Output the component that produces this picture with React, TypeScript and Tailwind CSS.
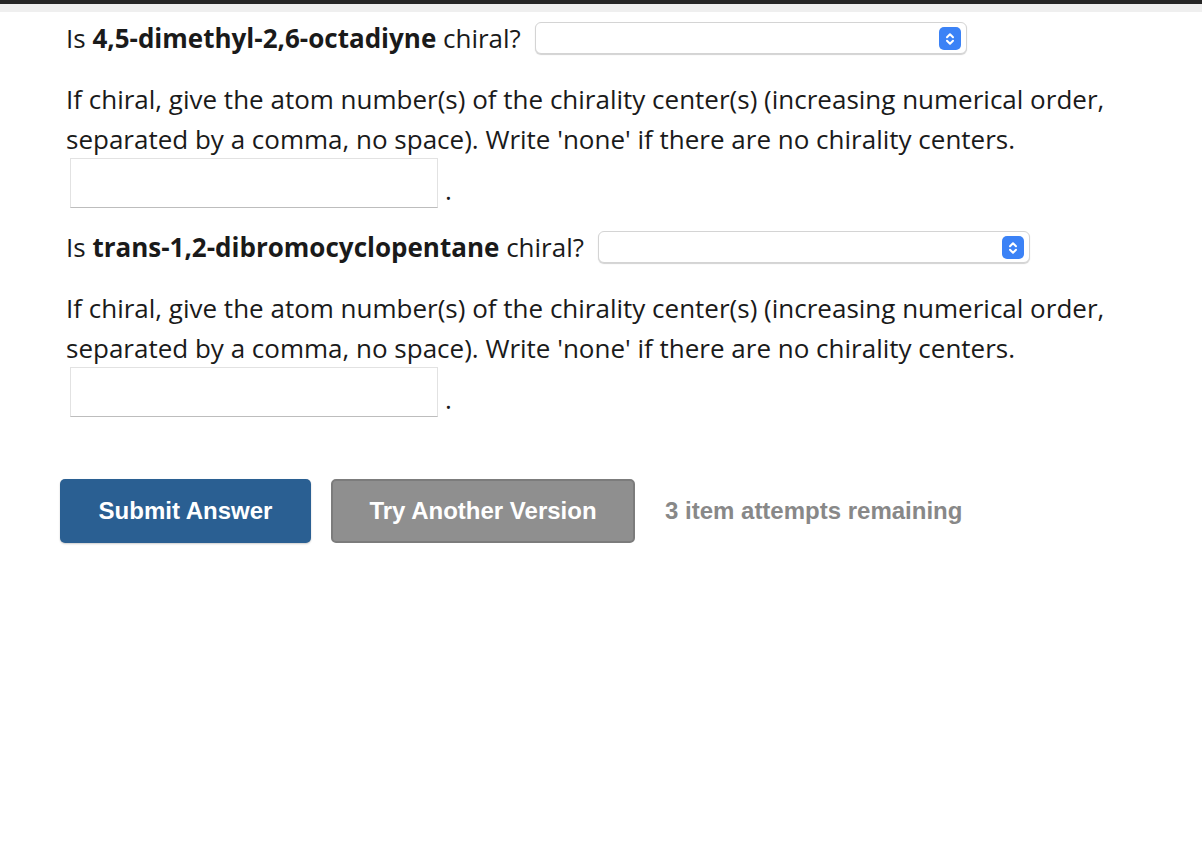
function Select({ width }: { width: string }) {
  return (
    <div
      className={`relative h-[32px] ${width} rounded-[6px] border border-[#d4d4d4] bg-white shadow-[0_1px_1px_rgba(0,0,0,0.18)]`}
    >
      <div className="absolute right-[5px] top-[4px] flex h-[23px] w-[22px] items-center justify-center rounded-[5px] bg-[#3b82f6]">
        <svg width="10" height="14" viewBox="0 0 10 14" fill="none">
          <path d="M2 5.2 5 2.2 8 5.2" stroke="white" strokeWidth="2" strokeLinecap="round" strokeLinejoin="round" />
          <path d="M2 8.8 5 11.8 8 8.8" stroke="white" strokeWidth="2" strokeLinecap="round" strokeLinejoin="round" />
        </svg>
      </div>
    </div>
  );
}

function Question({ name, selectWidth }: { name: string; selectWidth: string }) {
  return (
    <div>
      <div className="flex h-[32px] items-center gap-[14px]">
        <span>
          Is <b className="font-bold">{name}</b> chiral?
        </span>
        <Select width={selectWidth} />
      </div>
      <p className="mt-[25px]">
        If chiral, give the atom number(s) of the chirality center(s) (increasing numerical order,
        <br />
        separated by a comma, no space). Write 'none' if there are no chirality centers.
      </p>
      <div className="mt-[-1px] flex items-end pl-[4px]">
        <div className="h-[50px] w-[368px] border border-[#e2e2e2] border-b-[#bdbdbd] bg-white" />
        <span className="ml-[7px] leading-[36px]">.</span>
      </div>
    </div>
  );
}

export default function App() {
  return (
    <div className="min-h-[850px] bg-white font-['Open_Sans',sans-serif] text-[26px] leading-[40px] text-[#1a1a1a]">
      <div className="h-[4px] bg-[#262626]" />
      <div className="h-[8px] bg-[#efefef]" />
      <div className="pl-[66px] pt-[10px]">
        <Question name="4,5-dimethyl-2,6-octadiyne" selectWidth="w-[432px]" />
        <div className="mt-[23px]">
          <Question name="trans-1,2-dibromocyclopentane" selectWidth="w-[432px]" />
        </div>
      </div>
      <div className="mt-[62px] flex items-center pl-[60px] font-['Liberation_Sans',Arial,sans-serif] text-[24px] font-bold">
        <button className="h-[64px] w-[251px] rounded-[5px] bg-[#2a5f92] text-white shadow-[0_1px_2px_rgba(0,0,0,0.2)]">
          Submit Answer
        </button>
        <button className="ml-[20px] h-[64px] w-[304px] rounded-[5px] border-2 border-[#7c7c7c] bg-[#8f8f8f] text-white">
          Try Another Version
        </button>
        <span className="ml-[30px] text-[#888888]">3 item attempts remaining</span>
      </div>
    </div>
  );
}
